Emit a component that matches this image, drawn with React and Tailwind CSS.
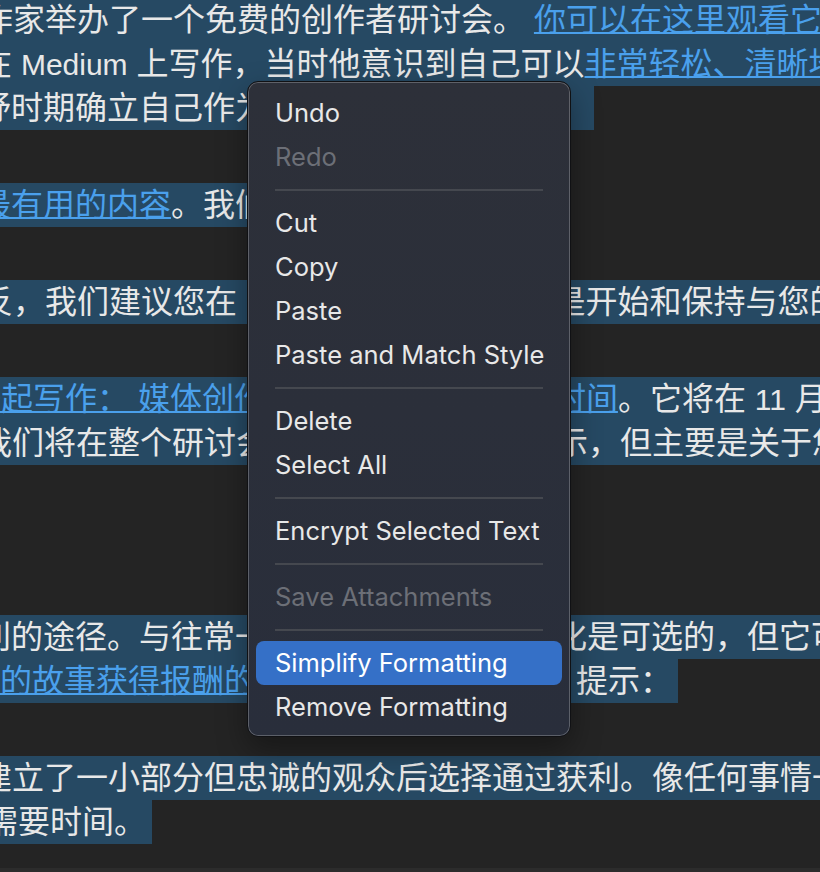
import React from "react";

const LINK = "text-[#4aa0ec] underline decoration-2";

const menuItems = [
  { label: "Undo" },
  { label: "Redo", disabled: true },
  { sep: true },
  { label: "Cut" },
  { label: "Copy" },
  { label: "Paste" },
  { label: "Paste and Match Style" },
  { sep: true },
  { label: "Delete" },
  { label: "Select All" },
  { sep: true },
  { label: "Encrypt Selected Text" },
  { sep: true },
  { label: "Save Attachments", disabled: true },
  { sep: true },
  { label: "Simplify Formatting", active: true },
  { label: "Remove Formatting" },
];

function FullLine({ className, children }) {
  return (
    <div className={`h-[44px] whitespace-nowrap bg-[#264963] leading-[44px] ${className}`}>
      {children}
    </div>
  );
}

function PartLine({ className, pad, children }) {
  return (
    <div className={`h-[44px] whitespace-nowrap leading-[44px] ${className}`}>
      <span className={`inline-block h-[44px] bg-[#264963] ${pad}`}>{children}</span>
    </div>
  );
}

function ContextMenu() {
  return (
    <div className="absolute left-[247px] top-[81px] w-[324px] rounded-[11px] border border-[#101114] bg-linear-to-b from-[#2d3039] to-[#292e3b] px-[8px] pb-[7px] pt-[9px] font-['Inter','Liberation_Sans',sans-serif] text-[25.5px] shadow-[inset_0_0_0_1px_rgba(255,255,255,0.24),0_12px_30px_rgba(0,0,0,0.35)]">
      {menuItems.map((item, i) =>
        item.sep ? (
          <div key={i} className="flex h-[22px] items-center px-[19px]">
            <div className="h-[2px] w-full bg-[#45484f]" />
          </div>
        ) : (
          <div
            key={i}
            className={`flex h-[44px] items-center whitespace-nowrap rounded-[8px] pl-[19px] pr-[8px] ${
              item.active
                ? "bg-[#3570c7] text-white"
                : item.disabled
                ? "text-[#6c6f77]"
                : "text-[#e8e8e8]"
            }`}
          >
            {item.label}
          </div>
        )
      )}
    </div>
  );
}

export default function App() {
  return (
    <div className="flex h-[872px] w-[820px] flex-col overflow-hidden bg-[#242424] font-['Liberation_Sans','Noto_Sans_CJK_SC',sans-serif] text-[32px] text-[#e8e8e8]">
      <div className="relative flex-1 overflow-hidden">
        <div className="mt-[-2px] flex flex-col gap-[53px]">
          <div>
            <FullLine className="ml-[-19px]">
              作家举办了一个免费的创作者研讨会。 <a className={LINK}>你可以在这里观看它的录像</a>。
            </FullLine>
            <FullLine className="ml-[-20px]">
              在 <span className="text-[30px]">Medium</span> 上写作，当时他意识到自己可以
              <a className={LINK}>非常轻松、清晰地表达自己的想法</a>
            </FullLine>
            <PartLine className="ml-[-21px]" pad="pr-[7px]">
              纾时期确立自己作为一名作家的独特地位。
            </PartLine>
          </div>

          <div>
            <PartLine className="ml-[-21px]" pad="pr-[4px]">
              <a className={LINK}>最有用的内容</a>。我们为您准备了
            </PartLine>
          </div>

          <div>
            <FullLine className="ml-[-19px]">
              反，我们建议您在 <span className="text-[30px]">Medium</span>{" "}
              上的第一步就是开始和保持与您的读者的联系。
            </FullLine>
          </div>

          <div>
            <FullLine className="ml-[-31px]">
              <a className={LINK}>一起写作： 媒体创作者研讨会的报名截止时间</a>。它将在{" "}
              <span className="text-[30px]">11</span> 月举行，
            </FullLine>
            <FullLine className="ml-[-20px]">
              我们将在整个研讨会中分享一些技巧和提示，但主要是关于您的写作
            </FullLine>
          </div>

          <div className="h-[44px]" />

          <div>
            <FullLine className="ml-[-21px]">
              利的途径。与往常一样，对所有作者货币化是可选的，但它可以帮助
            </FullLine>
            <PartLine className="ml-0" pad="pr-[6px]">
              <a className={LINK}>的故事获得报酬的方法</a>。以下是关键点，提示：
            </PartLine>
          </div>

          <div>
            <FullLine className="ml-[-20px]">
              建立了一小部分但忠诚的观众后选择通过获利。像任何事情一样，
            </FullLine>
            <PartLine className="ml-[-14px]" pad="pr-[6px]">
              需要时间。
            </PartLine>
          </div>
        </div>

        <ContextMenu />
      </div>
      <div className="h-[4px] bg-[#2c2c2c]" />
    </div>
  );
}
